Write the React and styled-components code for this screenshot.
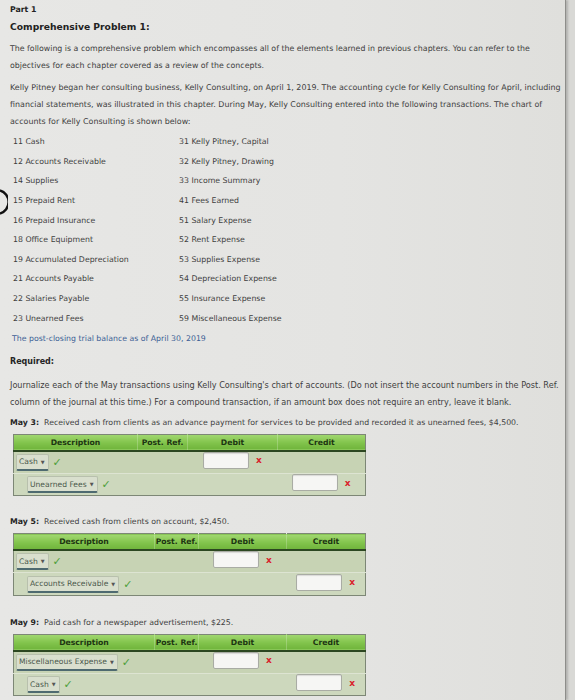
import React from 'react';
import styled, { createGlobalStyle } from 'styled-components';

const GlobalStyle = createGlobalStyle`
  html, body {
    margin: 0;
    padding: 0;
    background: #d9d9d6;
  }
  body {
    font-family: "DejaVu Sans", Verdana, sans-serif;
    color: #3d3d3d;
  }
`;

const Page = styled.div`
  position: relative;
  width: 566px;
  min-height: 700px;
  box-sizing: border-box;
  padding: 1px 4px 0 10px;
  background: linear-gradient(90deg, #e7e7e5 0%, #e4e4e2 60%, #dfdfdc 100%);
  border-right: 1px solid #8d8d8a;
  box-shadow: 2px 0 2px rgba(0, 0, 0, 0.18);
  overflow: hidden;
`;

const Heading = styled.div`
  font-weight: bold;
  font-size: ${(p) => p.$size || 9.2}px;
  line-height: 17px;
  color: #222;
  white-space: nowrap;
`;

const Para = styled.p`
  margin: ${(p) => p.$top || 0}px 0 0;
  font-size: ${(p) => p.$size || 7.9}px;
  line-height: 17px;
  color: #3e3e3e;
  white-space: nowrap;
`;

const Accounts = styled.div`
  display: grid;
  grid-template-columns: 166px auto;
  grid-auto-rows: 19.6px;
  margin: 2px 0 0 3px;
  font-size: 7.8px;
  color: #3e3e3e;
`;

const Account = styled.div`
  display: flex;
  align-items: center;
  white-space: nowrap;
`;

const Note = styled.div`
  margin: 2px 0 0 2px;
  font-size: 7.8px;
  line-height: 17px;
  color: #3c5f95;
`;

const Label = styled.span`
  font-weight: bold;
  color: #252525;
`;

const Table = styled.table`
  margin: 3px 0 0 3px;
  width: 352px;
  border-collapse: collapse;
  table-layout: fixed;
  border: 1px solid #7d8776;
`;

const HeadCell = styled.th`
  height: 15px;
  padding: 0;
  text-align: center;
  font-weight: bold;
  font-size: 7.7px;
  color: #1d3512;
  background: linear-gradient(180deg, #a2d872 0%, #82c44c 55%, #6fb43b 100%);
  border-bottom: 2px solid #2c4721;
  border-left: 1px solid rgba(255, 255, 255, 0.22);
  &:first-child {
    border-left: none;
  }
`;

const Row = styled.tr`
  height: 22.5px;
  background: ${(p) => (p.$alt ? '#cdd8bd' : '#c7d3b4')};
  border-top: ${(p) => (p.$alt ? '1px solid #dde4d2' : 'none')};
`;

const Cell = styled.td`
  padding: 0;
  vertical-align: middle;
`;

const AmountCell = styled.td`
  padding: 0;
  vertical-align: middle;
  text-align: center;
`;

const Pick = styled.div`
  display: flex;
  align-items: center;
  gap: 4px;
  padding-left: ${(p) => (p.$indent ? 13 : 2)}px;
`;

const Select = styled.span`
  display: inline-flex;
  align-items: center;
  gap: 3px;
  height: 14px;
  padding: 0 3px 0 2px;
  background: #d9dfce;
  border: 1px solid #b8c0ad;
  border-bottom: 2px solid #4e6a70;
  border-radius: 2px;
  color: #4a584b;
  font-size: 7.6px;
  white-space: nowrap;
`;

const Caret = styled.span`
  font-size: 5px;
  color: #555;
`;

const Check = styled.span`
  color: #4c9f3a;
  font-size: 11px;
  line-height: 1;
`;

const Amount = styled.span`
  display: inline-flex;
  align-items: center;
  gap: 7px;
`;

const Input = styled.span`
  display: inline-block;
  width: 44px;
  height: 15px;
  background: #f6f6f4;
  border: 1px solid #a9aca4;
  border-radius: 2px;
  box-shadow: inset 0 1px 1px rgba(0, 0, 0, 0.12);
`;

const Wrong = styled.span`
  color: #d9232b;
  font-weight: bold;
  font-size: 9px;
  width: 6px;
`;

const Arc = styled.svg`
  position: absolute;
  left: 0;
  top: 189px;
`;

const chart = [
  ['11 Cash', '31 Kelly Pitney, Capital'],
  ['12 Accounts Receivable', '32 Kelly Pitney, Drawing'],
  ['14 Supplies', '33 Income Summary'],
  ['15 Prepaid Rent', '41 Fees Earned'],
  ['16 Prepaid Insurance', '51 Salary Expense'],
  ['18 Office Equipment', '52 Rent Expense'],
  ['19 Accumulated Depreciation', '53 Supplies Expense'],
  ['21 Accounts Payable', '54 Depreciation Expense'],
  ['22 Salaries Payable', '55 Insurance Expense'],
  ['23 Unearned Fees', '59 Miscellaneous Expense'],
];

const entries = [
  {
    date: 'May 3:',
    text: 'Received cash from clients as an advance payment for services to be provided and recorded it as unearned fees, $4,500.',
    debit: 'Cash',
    credit: 'Unearned Fees',
    cols: [124, 50, 90, 88],
    labelTop: 3,
  },
  {
    date: 'May 5:',
    text: 'Received cash from clients on account, $2,450.',
    debit: 'Cash',
    credit: 'Accounts Receivable',
    cols: [141, 44, 88, 79],
    labelTop: 17,
  },
  {
    date: 'May 9:',
    text: 'Paid cash for a newspaper advertisement, $225.',
    debit: 'Miscellaneous Expense',
    credit: 'Cash',
    cols: [141, 44, 88, 79],
    labelTop: 18,
  },
];

const Journal = ({ entry }) => (
  <>
    <Para $top={entry.labelTop} $size={7.8}>
      <Label>{entry.date}</Label>&nbsp; {entry.text}
    </Para>
    <Table>
      <colgroup>
        {entry.cols.map((w, i) => (
          <col key={i} style={{ width: w }} />
        ))}
      </colgroup>
      <thead>
        <tr>
          <HeadCell>Description</HeadCell>
          <HeadCell>Post. Ref.</HeadCell>
          <HeadCell>Debit</HeadCell>
          <HeadCell>Credit</HeadCell>
        </tr>
      </thead>
      <tbody>
        <Row>
          <Cell>
            <Pick>
              <Select>
                {entry.debit} <Caret>▼</Caret>
              </Select>
              <Check>✓</Check>
            </Pick>
          </Cell>
          <Cell />
          <AmountCell>
            <Amount>
              <Input />
              <Wrong>x</Wrong>
            </Amount>
          </AmountCell>
          <Cell />
        </Row>
        <Row $alt>
          <Cell>
            <Pick $indent>
              <Select>
                {entry.credit} <Caret>▼</Caret>
              </Select>
              <Check>✓</Check>
            </Pick>
          </Cell>
          <Cell />
          <Cell />
          <AmountCell>
            <Amount>
              <Input />
              <Wrong>x</Wrong>
            </Amount>
          </AmountCell>
        </Row>
      </tbody>
    </Table>
  </>
);

export default function App() {
  return (
    <>
      <GlobalStyle />
      <Page>
        <Arc width="8" height="26" viewBox="0 0 8 26">
          <path d="M0 1.5 A 12 12 0 0 1 0 24.5" fill="none" stroke="#111" strokeWidth="2.4" />
        </Arc>
        <Heading $size={7.8}>Part 1</Heading>
        <Heading>Comprehensive Problem 1:</Heading>
        <Para $top={5} $size={7.85}>
          The following is a comprehensive problem which encompasses all of the elements learned in previous
          chapters. You can refer to the
          <br />
          objectives for each chapter covered as a review of the concepts.
        </Para>
        <Para $top={5} $size={7.95}>
          Kelly Pitney began her consulting business, Kelly Consulting, on April 1, 2019. The accounting cycle for
          Kelly Consulting for April, including
          <br />
          financial statements, was illustrated in this chapter. During May, Kelly Consulting entered into the
          following transactions. The chart of
          <br />
          accounts for Kelly Consulting is shown below:
        </Para>
        <Accounts>
          {chart.map(([a, b]) => (
            <React.Fragment key={a}>
              <Account>{a}</Account>
              <Account>{b}</Account>
            </React.Fragment>
          ))}
        </Accounts>
        <Note>The post-closing trial balance as of April 30, 2019</Note>
        <Para $top={6} $size={8}>
          <Label>Required:</Label>
        </Para>
        <Para $top={7} $size={8.15}>
          Journalize each of the May transactions using Kelly Consulting's chart of accounts. (Do not insert the
          account numbers in the Post. Ref.
          <br />
          column of the journal at this time.) For a compound transaction, if an amount box does not require an
          entry, leave it blank.
        </Para>
        {entries.map((e) => (
          <Journal key={e.date} entry={e} />
        ))}
      </Page>
    </>
  );
}
